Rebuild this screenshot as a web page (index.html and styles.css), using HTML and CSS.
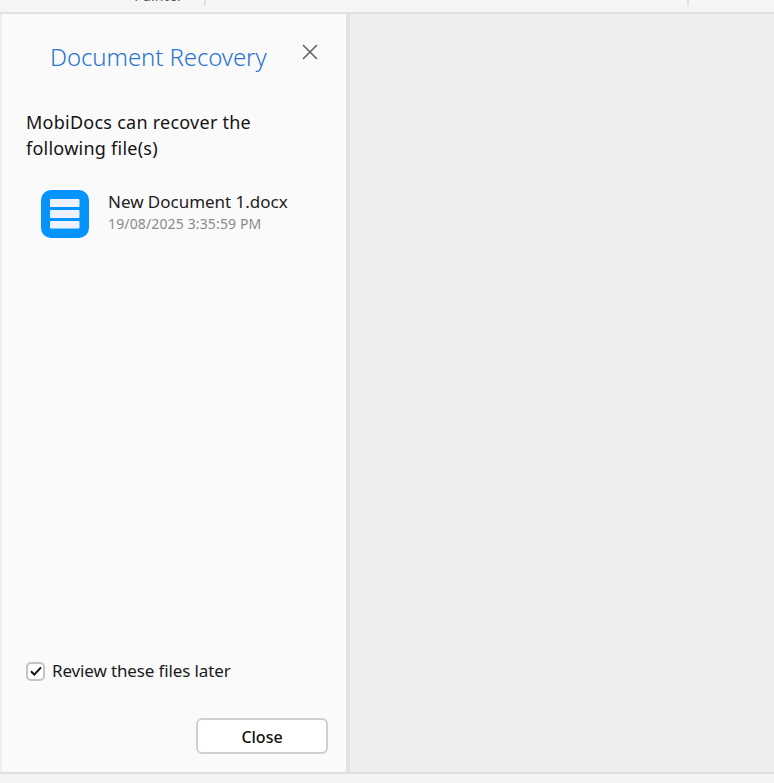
FILE: index.html
```html
<!DOCTYPE html>
<html lang="en">
<head>
<meta charset="utf-8">
<title>Document Recovery</title>
<link rel="stylesheet" href="styles.css">
</head>
<body>
<div class="app">
  <header class="ribbon">
    <div class="ribbon-cell cell-a"><span class="ribbon-label">Painter</span></div>
    <div class="ribbon-cell cell-b"></div>
    <div class="ribbon-cell cell-c"></div>
  </header>
  <main class="workspace">
    <aside class="pane">
      <div class="pane-head">
        <h1 class="pane-title">Document Recovery</h1>
        <button class="close-x" aria-label="Close">
          <svg width="16" height="16" viewBox="0 0 16 16"><path d="M1 1L15 15M15 1L1 15" fill="none" stroke="#5f6469" stroke-width="1.6"/></svg>
        </button>
      </div>
      <p class="pane-intro">MobiDocs can recover the following file(s)</p>
      <div class="file">
        <svg class="file-icon" width="48" height="48" viewBox="0 0 48 48">
          <rect width="48" height="48" rx="10" fill="#0494fc"/>
          <rect x="9" y="9" width="29.5" height="8" rx="1" fill="#eff1fd"/>
          <rect x="9" y="20" width="29.5" height="8" rx="1" fill="#eff1fd"/>
          <rect x="9" y="31" width="29.5" height="7.5" rx="1" fill="#eff1fd"/>
        </svg>
        <div class="file-text">
          <div class="file-name">New Document 1.docx</div>
          <div class="file-date">19/08/2025 3:35:59 PM</div>
        </div>
      </div>
      <label class="review">
        <span class="check">
          <svg width="12" height="10" viewBox="0 0 12 10"><path d="M1 5.2L4.3 8.6L11 1.4" fill="none" stroke="#111" stroke-width="2"/></svg>
        </span>
        <span>Review these files later</span>
      </label>
      <div class="actions"><button class="close-btn">Close</button></div>
    </aside>
    <section class="canvas"></section>
  </main>
  <footer class="status"></footer>
</div>
</body>
</html>
```
FILE: styles.css
```css
* { box-sizing: border-box; }
html, body { margin: 0; height: 100%; }
body { background: #f3f3f3; font-family: "Noto Sans", "Open Sans", sans-serif; color: #1a1a1a; overflow: hidden; }
.app { width: 774px; height: 783px; display: flex; flex-direction: column; }
.ribbon { height: 14px; border-bottom: 2px solid #e0e0e0; background: #f5f5f5; display: flex; overflow: hidden; }
.ribbon-cell { height: 6px; }
.cell-a { width: 206px; border-right: 2px solid #e2e2e2; display: flex; justify-content: flex-end; padding-right: 21px; }
.cell-b { width: 483px; border-right: 2px solid #e2e2e2; }
.cell-c { flex: 1; }
.ribbon-label { font-size: 14px; line-height: 14px; margin-top: -11px; color: #555; height: 14px; letter-spacing: 0.2px; }
.workspace { height: 760px; display: flex; padding-left: 2px; background: #eeeeee; border-bottom: 2px solid #e0e0e0; }
.pane { width: 348px; background: #fafafa; border-right: 4px solid #e2e2e2; display: flex; flex-direction: column; padding: 0 28px 0 24px; }
.pane-head { display: flex; align-items: flex-start; height: 95px; }
.pane-title { margin: 27px 0 0 24px; font-size: 24px; line-height: 32px; font-weight: 300; color: #2a74d4; white-space: nowrap; flex: 1; letter-spacing: -0.1px; }
.close-x { margin: 30px 0 0 0; padding: 0; width: 16px; height: 16px; border: 0; background: none; display: block; }
.close-x svg { display: block; }
.pane-intro { margin: 0; width: 270px; font-size: 18px; line-height: 26px; color: #141414; letter-spacing: 0.25px; }
.file { display: flex; align-items: center; gap: 19px; margin: 29px 0 0 15px; }
.file-icon { flex: none; display: block; }
.file-text { padding-bottom: 2px; }
.file-name { font-size: 17px; line-height: 22px; color: #222; letter-spacing: -0.02px; }
.file-date { font-size: 14px; line-height: 22px; color: #8a8a8a; letter-spacing: 0.14px; }
.review { margin-top: auto; display: flex; align-items: center; gap: 7px; font-size: 17px; line-height: 22px; color: #1a1a1a; letter-spacing: -0.13px; }
.check { width: 19px; height: 19px; border: 2px solid #c4c4c4; border-radius: 5px; background: #fff; display: flex; align-items: center; justify-content: center; }
.actions { display: flex; justify-content: flex-end; margin: 36px -10px 0 0; height: 54px; }
.close-btn { width: 132px; height: 36px; background: #fff; border: 2px solid #d0d0d0; border-radius: 6px; font: 500 16px/22px "Noto Sans", sans-serif; color: #111; padding: 2px 0 0; }
.canvas { flex: 1; }
.status { flex: 1; background: #f4f4f4; }
```
